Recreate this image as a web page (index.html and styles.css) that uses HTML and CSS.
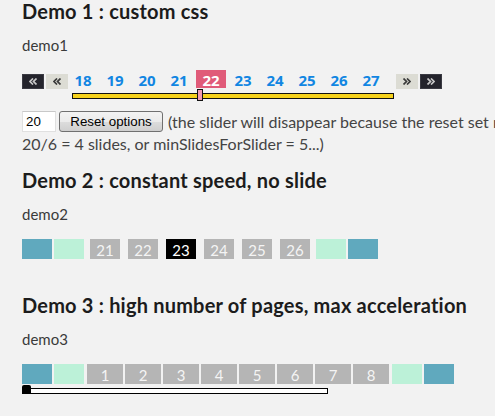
FILE: index.html
```html
<!DOCTYPE html>
<html>
<head>
<meta charset="utf-8">
<link rel="stylesheet" href="styles.css">
</head>
<body>
<section class="demo demo1">
  <h2 class="title">Demo 1 : custom css</h2>
  <p class="label">demo1</p>
  <div class="pager1">
    <span class="pbtn dark first"><svg class="chev" viewBox="0 0 8 7"><path d="M4 0.5 1 3.5 4 6.5M7.5 0.5 4.5 3.5 7.5 6.5"/></svg></span>
    <span class="pbtn light"><svg class="chev" viewBox="0 0 8 7"><path d="M4 0.5 1 3.5 4 6.5M7.5 0.5 4.5 3.5 7.5 6.5"/></svg></span>
    <div class="p1-view">
      <span class="p1-num">18</span>
      <span class="p1-num">19</span>
      <span class="p1-num">20</span>
      <span class="p1-num">21</span>
      <span class="p1-num current">22</span>
      <span class="p1-num">23</span>
      <span class="p1-num">24</span>
      <span class="p1-num">25</span>
      <span class="p1-num">26</span>
      <span class="p1-num">27</span>
    </div>
    <span class="pbtn light"><svg class="chev" viewBox="0 0 8 7"><path d="M4 0.5 7 3.5 4 6.5M0.5 0.5 3.5 3.5 0.5 6.5"/></svg></span>
    <span class="pbtn dark last"><svg class="chev" viewBox="0 0 8 7"><path d="M4 0.5 7 3.5 4 6.5M0.5 0.5 3.5 3.5 0.5 6.5"/></svg></span>
  </div>
  <div class="slider1"><span class="handle1"></span></div>
  <div class="form-row">
    <input class="num-input" type="text" value="20">
    <button class="reset-btn" type="button">Reset options</button>
    <span class="note">(the slider will disappear because the reset set nbPages = 20 and nbPerPage = 6, so</span>
  </div>
  <div class="note-line">20/6 = 4 slides, or minSlidesForSlider = 5...)</div>
</section>

<section class="demo demo2">
  <h2 class="title">Demo 2 : constant speed, no slide</h2>
  <p class="label">demo2</p>
  <div class="pager2">
    <span class="blk teal"></span>
    <span class="blk mint"></span>
    <div class="p2-pages">
      <span class="blk gray">21</span>
      <span class="blk gray">22</span>
      <span class="blk black">23</span>
      <span class="blk gray">24</span>
      <span class="blk gray">25</span>
      <span class="blk gray">26</span>
    </div>
    <span class="blk mint"></span>
    <span class="blk teal"></span>
  </div>
</section>

<section class="demo demo3">
  <h2 class="title">Demo 3 : high number of pages, max acceleration</h2>
  <p class="label">demo3</p>
  <div class="pager3">
    <span class="blk teal"></span>
    <span class="blk mint"></span>
    <div class="p3-pages">
      <span class="blk gray wide">1</span>
      <span class="blk gray wide">2</span>
      <span class="blk gray wide">3</span>
      <span class="blk gray wide">4</span>
      <span class="blk gray wide">5</span>
      <span class="blk gray wide">6</span>
      <span class="blk gray wide">7</span>
      <span class="blk gray wide">8</span>
    </div>
    <span class="blk mint"></span>
    <span class="blk teal"></span>
  </div>
  <div class="slider3"><span class="handle3"></span></div>
</section>
</body>
</html>
```
FILE: styles.css
```css
html {
  overflow: hidden;
}
body {
  margin: 0;
  padding: 0 0 0 22px;
  background: #f2f2f2;
  font-family: Lato, "Open Sans", sans-serif;
  color: #333;
}
.title {
  margin: 0 0 13px;
  font-size: 20px;
  line-height: 22px;
  letter-spacing: 0.2px;
  font-weight: 700;
  color: #1c1c1c;
  white-space: nowrap;
}
.demo2 .title {
  margin-top: 15px;
}
.demo3 .title {
  margin-top: 35px;
}
.label {
  margin: 0 0 15px;
  font-size: 15px;
  line-height: 20px;
  color: #3a3a3a;
}

/* demo 1 */
.pager1 {
  display: flex;
  align-items: flex-start;
  height: 19px;
}
.pbtn {
  flex-shrink: 0;
  width: 22px;
  height: 15px;
  margin-top: 4px;
  box-sizing: border-box;
  display: flex;
  align-items: center;
  justify-content: center;
}
.pbtn.dark {
  background: #24242c;
  border: 1px solid #3a3a42;
  color: #c8c8c8;
}
.pbtn.light {
  background: #dcdcd4;
  color: #3a3a3a;
}
.pbtn.first {
  margin-right: 2px;
}
.pbtn.last {
  margin-left: 2px;
}
.chev {
  width: 8px;
  height: 7px;
}
.chev path {
  fill: none;
  stroke: currentColor;
  stroke-width: 1.7;
}
.p1-view {
  flex-shrink: 0;
  width: 328px;
  display: flex;
  gap: 2px;
}
.p1-num {
  width: 30px;
  height: 18px;
  line-height: 20px;
  text-align: center;
  font-family: "Open Sans", sans-serif;
  font-weight: 700;
  font-size: 15px;
  color: #1186e2;
}
.p1-num.current {
  background: #e05b79;
  color: #fff;
}
.slider1 {
  position: relative;
  margin: 4px 0 0 50px;
  width: 322px;
  height: 6px;
  box-sizing: border-box;
  border: 1px solid #111;
  background: #f6d21c;
}
.handle1 {
  position: absolute;
  left: 124px;
  top: -5px;
  width: 6px;
  height: 12px;
  box-sizing: border-box;
  border: 1px solid #111;
  background: #f29ab2;
}
.form-row {
  margin-top: 12px;
  display: flex;
  align-items: center;
  height: 21px;
}
.num-input {
  flex-shrink: 0;
  width: 34px;
  height: 21px;
  box-sizing: border-box;
  margin: 0 3px 0 0;
  padding: 0 3px;
  border: 1px solid #e0e0e0;
  border-top-color: #c8c8c8;
  background: #fff;
  font: 13.333px "Liberation Sans", Arial, sans-serif;
  color: #000;
}
.reset-btn {
  flex-shrink: 0;
  width: 104px;
  height: 21px;
  box-sizing: border-box;
  margin: 0 5px 0 0;
  padding: 0;
  border: 1px solid #707070;
  border-radius: 3px;
  background: linear-gradient(#f3f3f3, #ebebeb 50%, #dddddd 51%, #cfcfcf);
  font: 13.333px "Liberation Sans", Arial, sans-serif;
  color: #000;
  white-space: nowrap;
}
.note {
  flex-shrink: 0;
  white-space: nowrap;
  font-size: 16px;
  line-height: 21px;
  color: #444;
}
.note-line {
  margin-top: 2px;
  font-size: 16px;
  line-height: 20px;
  color: #444;
  white-space: nowrap;
}

/* blocks (demo 2 & 3) */
.pager2,
.pager3 {
  display: flex;
  height: 20px;
}
.blk {
  flex-shrink: 0;
  width: 30px;
  height: 20px;
  box-sizing: border-box;
  padding-top: 1px;
  line-height: 20px;
  text-align: center;
  font-size: 15px;
  color: #f4f4f4;
  overflow: hidden;
}
.blk.teal {
  background: #60a9be;
}
.blk.mint {
  background: #bcf1d8;
}
.blk.gray {
  background: #b5b5b5;
}
.blk.black {
  background: #000;
  color: #fff;
}
.blk.wide {
  width: 36px;
}
.pager2 > .blk + .blk,
.pager3 > .blk + .blk {
  margin-left: 2px;
}
.p2-pages {
  display: flex;
  gap: 8px;
  padding: 0 6px;
}
.p3-pages {
  display: flex;
  gap: 2px;
  padding: 0 3px;
}
.slider3 {
  position: relative;
  margin-top: 4px;
  width: 306px;
  height: 6px;
  box-sizing: border-box;
  border: 1px solid #000;
  background: #fff;
}
.handle3 {
  position: absolute;
  left: -1px;
  top: -4px;
  width: 9px;
  height: 12px;
  border-radius: 2px;
  background: #000;
}
```
